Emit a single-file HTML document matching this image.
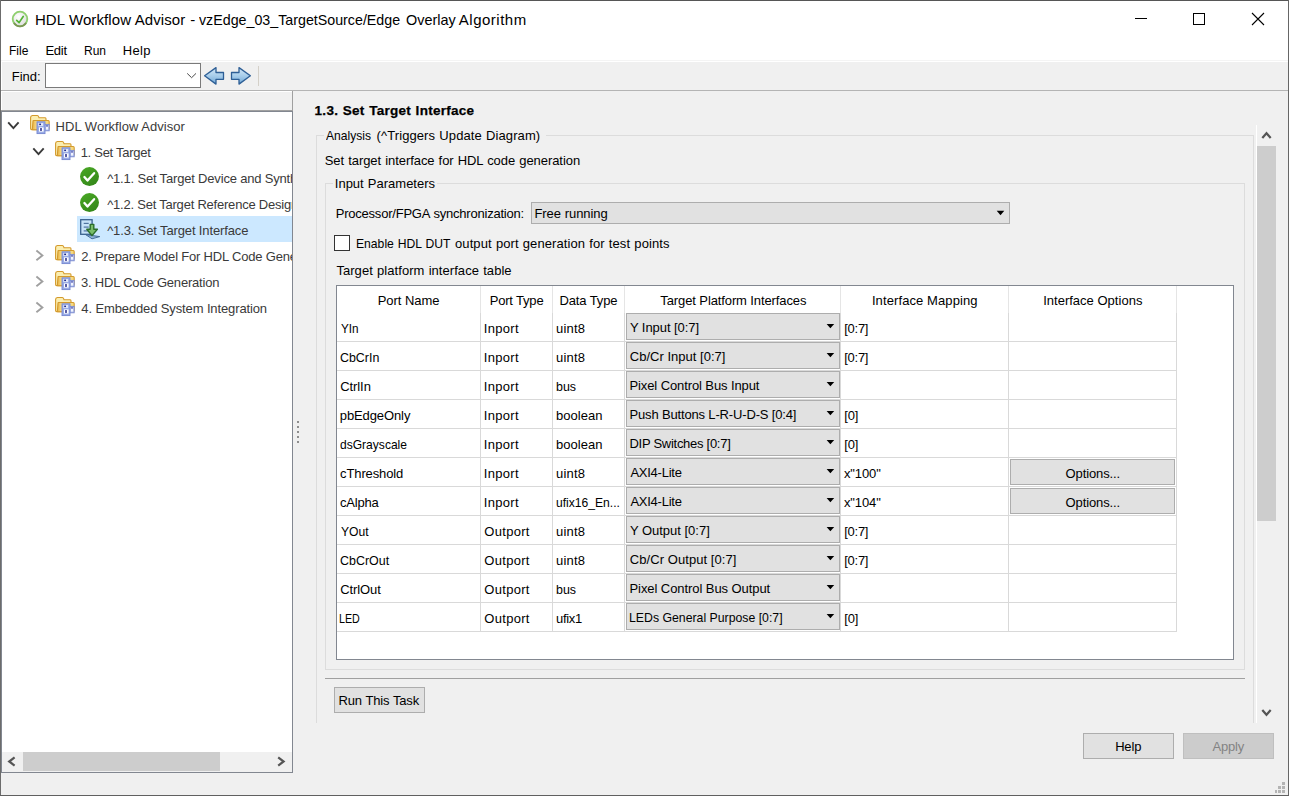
<!DOCTYPE html>
<html><head><meta charset="utf-8"><title>HDL Workflow Advisor</title>
<style>
html,body{margin:0;padding:0;background:#f0f0f0;}
body{width:1289px;height:796px;overflow:hidden;position:relative;font-family:"Liberation Sans",sans-serif;}
#win{position:absolute;left:0;top:0;width:1289px;height:796px;overflow:hidden;}
.b{position:absolute;}
.t{position:absolute;transform-origin:0 0;white-space:nowrap;line-height:20px;height:20px;color:#000;font-family:"Liberation Sans",sans-serif;}
svg{position:absolute;left:0;top:0;}
</style></head><body><div id="win">
<div class="b" style="left:0px;top:0px;width:1289px;height:796px;background:#f0f0f0;"></div>
<div class="b" style="left:0px;top:0px;width:1289px;height:60px;background:#ffffff;"></div>
<div class="b" style="left:0px;top:60px;width:1289px;height:1px;background:#f4f4f4;"></div>
<div class="b" style="left:0px;top:61px;width:1289px;height:1px;background:#ffffff;"></div>
<div class="b" style="left:1px;top:61px;width:1px;height:29px;background:#ffffff;"></div>
<div class="b" style="left:1px;top:90px;width:1287px;height:1px;background:#b4b4b4;"></div>
<div class="b" style="left:1px;top:91px;width:291px;height:1px;background:#ffffff;"></div>
<div class="b" style="left:292px;top:91px;width:1px;height:20px;background:#a0a0a0;"></div>
<div class="b" style="left:45px;top:63px;width:156px;height:25px;background:#fff;border:1px solid #7a7a7a;box-sizing:border-box;"></div>
<div class="b" style="left:258px;top:66px;width:1px;height:20px;background:#d4d0c8;"></div>
<div class="b" style="left:1px;top:91px;width:1px;height:20px;background:#ffffff;"></div>
<div class="b" style="left:1px;top:110px;width:292px;height:1px;background:#a0a0a0;"></div>
<div class="b" style="left:1px;top:111px;width:292px;height:662px;background:#fff;border:1px solid #828790;box-sizing:border-box;"></div>
<div class="b" style="left:77px;top:216px;width:215px;height:26px;background:#cce8ff;"></div>
<div class="b" style="left:2px;top:752px;width:290px;height:20px;background:#f0f0f0;"></div>
<div class="b" style="left:23px;top:752px;width:197px;height:19px;background:#cdcdcd;"></div>
<div class="b" style="left:316px;top:135px;width:1px;height:588px;background:#dcdcdc;"></div>
<div class="b" style="left:316px;top:135px;width:938px;height:1px;background:#dcdcdc;"></div>
<div class="b" style="left:1253px;top:135px;width:1px;height:588px;background:#dcdcdc;"></div>
<div class="b" style="left:324px;top:128px;width:222px;height:16px;background:#f0f0f0;"></div>
<div class="b" style="left:325px;top:183px;width:920px;height:487px;border:1px solid #dcdcdc;box-sizing:border-box;"></div>
<div class="b" style="left:333px;top:176px;width:104px;height:16px;background:#f0f0f0;"></div>
<div class="b" style="left:1256px;top:125px;width:1px;height:598px;background:#ffffff;"></div>
<div class="b" style="left:1257px;top:146px;width:19px;height:375px;background:#cdcdcd;"></div>
<div class="b" style="left:531px;top:202px;width:479px;height:22px;background:#e1e1e1;border:1px solid #adadad;box-sizing:border-box;"></div>
<div class="b" style="left:334px;top:235px;width:16px;height:16px;background:#fff;border:1px solid #333;box-sizing:border-box;"></div>
<div class="b" style="left:336px;top:285px;width:898px;height:375px;background:#fff;border:1px solid #828790;box-sizing:border-box;"></div>
<div class="b" style="left:480px;top:286px;width:1px;height:27px;background:#e5e5e5;"></div>
<div class="b" style="left:480px;top:313px;width:1px;height:319px;background:#d9d9d9;"></div>
<div class="b" style="left:552px;top:286px;width:1px;height:27px;background:#e5e5e5;"></div>
<div class="b" style="left:552px;top:313px;width:1px;height:319px;background:#d9d9d9;"></div>
<div class="b" style="left:624px;top:286px;width:1px;height:27px;background:#e5e5e5;"></div>
<div class="b" style="left:624px;top:313px;width:1px;height:319px;background:#d9d9d9;"></div>
<div class="b" style="left:840px;top:286px;width:1px;height:27px;background:#e5e5e5;"></div>
<div class="b" style="left:840px;top:313px;width:1px;height:319px;background:#d9d9d9;"></div>
<div class="b" style="left:1008px;top:286px;width:1px;height:27px;background:#e5e5e5;"></div>
<div class="b" style="left:1008px;top:313px;width:1px;height:319px;background:#d9d9d9;"></div>
<div class="b" style="left:1176px;top:286px;width:1px;height:27px;background:#e5e5e5;"></div>
<div class="b" style="left:1176px;top:313px;width:1px;height:319px;background:#d9d9d9;"></div>
<div class="b" style="left:337px;top:341px;width:840px;height:1px;background:#d9d9d9;"></div>
<div class="b" style="left:337px;top:370px;width:840px;height:1px;background:#d9d9d9;"></div>
<div class="b" style="left:337px;top:399px;width:840px;height:1px;background:#d9d9d9;"></div>
<div class="b" style="left:337px;top:428px;width:840px;height:1px;background:#d9d9d9;"></div>
<div class="b" style="left:337px;top:457px;width:840px;height:1px;background:#d9d9d9;"></div>
<div class="b" style="left:337px;top:486px;width:840px;height:1px;background:#d9d9d9;"></div>
<div class="b" style="left:337px;top:515px;width:840px;height:1px;background:#d9d9d9;"></div>
<div class="b" style="left:337px;top:544px;width:840px;height:1px;background:#d9d9d9;"></div>
<div class="b" style="left:337px;top:573px;width:840px;height:1px;background:#d9d9d9;"></div>
<div class="b" style="left:337px;top:602px;width:840px;height:1px;background:#d9d9d9;"></div>
<div class="b" style="left:337px;top:631px;width:840px;height:1px;background:#d9d9d9;"></div>
<div class="b" style="left:626px;top:313px;width:214px;height:27px;background:#e1e1e1;border:1px solid #adadad;box-sizing:border-box;"></div>
<div class="b" style="left:626px;top:342px;width:214px;height:27px;background:#e1e1e1;border:1px solid #adadad;box-sizing:border-box;"></div>
<div class="b" style="left:626px;top:371px;width:214px;height:27px;background:#e1e1e1;border:1px solid #adadad;box-sizing:border-box;"></div>
<div class="b" style="left:626px;top:400px;width:214px;height:27px;background:#e1e1e1;border:1px solid #adadad;box-sizing:border-box;"></div>
<div class="b" style="left:626px;top:429px;width:214px;height:27px;background:#e1e1e1;border:1px solid #adadad;box-sizing:border-box;"></div>
<div class="b" style="left:626px;top:458px;width:214px;height:27px;background:#e1e1e1;border:1px solid #adadad;box-sizing:border-box;"></div>
<div class="b" style="left:626px;top:487px;width:214px;height:27px;background:#e1e1e1;border:1px solid #adadad;box-sizing:border-box;"></div>
<div class="b" style="left:626px;top:516px;width:214px;height:27px;background:#e1e1e1;border:1px solid #adadad;box-sizing:border-box;"></div>
<div class="b" style="left:626px;top:545px;width:214px;height:27px;background:#e1e1e1;border:1px solid #adadad;box-sizing:border-box;"></div>
<div class="b" style="left:626px;top:574px;width:214px;height:27px;background:#e1e1e1;border:1px solid #adadad;box-sizing:border-box;"></div>
<div class="b" style="left:626px;top:603px;width:214px;height:27px;background:#e1e1e1;border:1px solid #adadad;box-sizing:border-box;"></div>
<div class="b" style="left:1010px;top:459px;width:165px;height:26px;background:#e1e1e1;border:1px solid #adadad;box-sizing:border-box;"></div>
<div class="b" style="left:1010px;top:488px;width:165px;height:26px;background:#e1e1e1;border:1px solid #adadad;box-sizing:border-box;"></div>
<div class="b" style="left:325px;top:678px;width:920px;height:1px;background:#a0a0a0;"></div>
<div class="b" style="left:334px;top:687px;width:91px;height:26px;background:#e1e1e1;border:1px solid #adadad;box-sizing:border-box;"></div>
<div class="b" style="left:1083px;top:733px;width:91px;height:26px;background:#e1e1e1;border:1px solid #adadad;box-sizing:border-box;"></div>
<div class="b" style="left:1183px;top:733px;width:91px;height:26px;background:#cccccc;border:1px solid #bfbfbf;box-sizing:border-box;"></div>
<svg width="1289" height="796" viewBox="0 0 1289 796">
<defs>
<linearGradient id="gArrow" x1="0" y1="0" x2="0" y2="1"><stop offset="0" stop-color="#d4e8f7"/><stop offset="0.5" stop-color="#a7cdea"/><stop offset="1" stop-color="#6fa6d6"/></linearGradient>
<linearGradient id="gFold" x1="0" y1="0" x2="1" y2="0"><stop offset="0" stop-color="#e9b443"/><stop offset="0.35" stop-color="#fbe9a0"/><stop offset="1" stop-color="#f5d678"/></linearGradient>
<linearGradient id="gGreen" x1="0" y1="0" x2="0.6" y2="1"><stop offset="0" stop-color="#4aa925"/><stop offset="1" stop-color="#35891a"/></linearGradient>
<radialGradient id="gBall" cx="0.4" cy="0.35" r="0.7"><stop offset="0" stop-color="#ffffff"/><stop offset="1" stop-color="#dcdcdc"/></radialGradient>
<g id="folder">
  <path d="M0.6 3.4 Q0.6 1.4 2.4 1.3 L7.4 1.3 Q8.6 1.4 9 3.5 L15.2 3.5 Q16 3.6 16 4.7 L16 14.4 Q16 15.4 15 15.4 L1.6 15.4 Q0.6 15.4 0.6 14.4 Z" fill="#fbeeb0" stroke="#d49a2c" stroke-width="1.1"/>
  <path d="M3.4 6.3 L18.2 6.3 Q19.2 6.4 19.2 7.5 L19.2 14.4 Q19.2 15.5 18.2 15.5 L2.6 15.5 Q2.2 15.5 2.4 14.6 L3.0 6.9 Q3.0 6.3 3.4 6.3 Z" fill="url(#gFold)" stroke="#d39a2e" stroke-width="1.1"/>
  <rect x="14.6" y="10.2" width="4.6" height="6.4" fill="#a9b8ea" stroke="#7c8cd2" stroke-width="0.9"/>
  <rect x="15.8" y="11.6" width="2.4" height="3.8" fill="#f2f5fd"/>
  <rect x="16.4" y="11.0" width="1.2" height="1.6" fill="#34399f"/>
  <rect x="7.0" y="7.6" width="8.0" height="11.8" fill="#9aace6" stroke="#7587d0" stroke-width="0.9"/>
  <rect x="8.3" y="8.8" width="4.8" height="3.0" fill="#dfe6f8"/>
  <rect x="9.2" y="9.4" width="1.8" height="1.5" fill="#1f2889"/>
  <rect x="9.0" y="13.2" width="4.6" height="4.2" fill="#ffffff"/>
  <rect x="10.3" y="13.7" width="1.4" height="3.2" rx="0.6" fill="#10167c"/>
</g>
<g id="okc">
  <circle cx="9.6" cy="9.6" r="9.5" fill="url(#gGreen)"/>
  <path d="M4.5 10 L7.6 13.6 L14.2 6.2" fill="none" stroke="#ffffff" stroke-width="2.3" stroke-linecap="round" stroke-linejoin="round"/>
</g>
<path id="chevD" d="M-5.2 -2.9 L0 2.9 L5.2 -2.9" fill="none" stroke="#3a3a3a" stroke-width="1.9"/>
<path id="chevR" d="M-3 -4.9 L3 0 L-3 4.9" fill="none" stroke="#a0a0a0" stroke-width="1.9"/>
<path id="tri" d="M0 0 L7.6 0 L3.8 4.4 Z" fill="#000"/>
</defs>
<circle cx="20" cy="19" r="7.3" fill="url(#gBall)" stroke="#8fcf6e" stroke-width="1.8"/>
<path d="M13.9 23 A7.3 7.3 0 0 0 26.1 23" fill="none" stroke="#7b9655" stroke-width="1.8"/>
<path d="M16.7 20.4 L19.1 22.6 L23.2 16.5" fill="none" stroke="#55b336" stroke-width="1.7" stroke-linecap="round" stroke-linejoin="round"/>
<rect x="1135" y="18" width="12" height="1" fill="#000"/>
<rect x="1193.5" y="13.5" width="11" height="11" fill="none" stroke="#000" stroke-width="1"/>
<path d="M1252 13 L1264 25 M1264 13 L1252 25" stroke="#000" stroke-width="1.1" fill="none"/>
<path d="M187.2 73.4 L191.6 77.7 L196 73.4" fill="none" stroke="#4a4a4a" stroke-width="1" stroke-linejoin="round"/>
<path d="M204.6 75.8 L216 67.6 L216 72.5 L223.5 72.5 L223.5 79.3 L216 79.3 L216 84.1 Z" fill="url(#gArrow)" stroke="#2e5f96" stroke-width="1.3" stroke-linejoin="round"/>
<path d="M250.4 75.8 L239 67.6 L239 72.5 L231.5 72.5 L231.5 79.3 L239 79.3 L239 84.1 Z" fill="url(#gArrow)" stroke="#2e5f96" stroke-width="1.3" stroke-linejoin="round"/>
<use href="#chevD" x="13.4" y="125.3"/>
<use href="#chevD" x="38.5" y="151.3"/>
<use href="#chevR" x="39.4" y="255.4"/>
<use href="#chevR" x="39.4" y="281.4"/>
<use href="#chevR" x="39.4" y="307.4"/>
<use href="#folder" x="30" y="114.2"/>
<use href="#folder" x="55" y="140.2"/>
<use href="#folder" x="55" y="244.2"/>
<use href="#folder" x="55" y="270.2"/>
<use href="#folder" x="55" y="296.2"/>
<use href="#okc" x="79.9" y="167"/>
<use href="#okc" x="79.9" y="193"/>
<rect x="80.7" y="219.7" width="11.4" height="14.6" fill="#c6e1f8" stroke="#3a628f" stroke-width="1.3"/>
<rect x="83.7" y="222.8" width="5" height="1.2" fill="#4f74a0"/>
<rect x="83.7" y="226.5" width="5" height="1.2" fill="#4f74a0"/>
<rect x="83.7" y="230.3" width="5" height="1.2" fill="#4f74a0"/>
<path d="M85.6 234.6 L99.8 236.6 L92 238.8 Z" fill="#8fb2d8" stroke="#3a628f" stroke-width="0.9"/>
<path d="M90.2 224.4 L93.8 224.4 L93.8 229.2 L97.4 229.2 L92 235.6 L86.8 229.2 L90.2 229.2 Z" fill="#79bd69" stroke="#2b6e2b" stroke-width="1.4" stroke-linejoin="round"/>
<path d="M14.6 757.4 L9.2 761.5 L14.6 765.6" fill="none" stroke="#555" stroke-width="2.2"/>
<path d="M278.2 757.4 L283.6 761.5 L278.2 765.6" fill="none" stroke="#555" stroke-width="2.2"/>
<path d="M1262.3 138 L1266.5 133.2 L1270.7 138" fill="none" stroke="#555" stroke-width="2.2"/>
<path d="M1262.3 710 L1266.5 714.8 L1270.7 710" fill="none" stroke="#555" stroke-width="2.2"/>
<use href="#tri" x="996.7" y="210.8"/>
<use href="#tri" x="826.6" y="323.9"/>
<use href="#tri" x="826.6" y="352.9"/>
<use href="#tri" x="826.6" y="381.9"/>
<use href="#tri" x="826.6" y="410.9"/>
<use href="#tri" x="826.6" y="439.9"/>
<use href="#tri" x="826.6" y="468.9"/>
<use href="#tri" x="826.6" y="497.9"/>
<use href="#tri" x="826.6" y="526.9"/>
<use href="#tri" x="826.6" y="555.9"/>
<use href="#tri" x="826.6" y="584.9"/>
<use href="#tri" x="826.6" y="613.9"/>
<rect x="297" y="421" width="2" height="2" fill="#8e8e8e"/>
<rect x="297" y="426" width="2" height="2" fill="#8e8e8e"/>
<rect x="297" y="431" width="2" height="2" fill="#8e8e8e"/>
<rect x="297" y="436" width="2" height="2" fill="#8e8e8e"/>
<rect x="297" y="441" width="2" height="2" fill="#8e8e8e"/>
<rect x="1282" y="782" width="3" height="3" fill="#b4b4b4"/>
<rect x="1278" y="786" width="3" height="3" fill="#b4b4b4"/>
<rect x="1282" y="786" width="3" height="3" fill="#b4b4b4"/>
<rect x="1275" y="790" width="2" height="3" fill="#b4b4b4"/>
<rect x="1278" y="790" width="3" height="3" fill="#b4b4b4"/>
<rect x="1282" y="790" width="3" height="3" fill="#b4b4b4"/>
</svg>
<span class="t" id="t0" style="left:34.90px;top:10px;font-size:15px;letter-spacing:0.106px;">HDL Workflow Advisor</span>
<span class="t" id="t1" style="left:190.20px;top:10px;font-size:15px;letter-spacing:-0.150px;">-</span>
<span class="t" id="t2" style="left:199.36px;top:10px;font-size:15px;transform:scaleX(0.9495);">vzEdge_03_TargetSource/Edge</span>
<span class="t" id="t3" style="left:405.56px;top:10px;font-size:15px;transform:scaleX(0.9614);">Overlay</span>
<span class="t" id="t4" style="left:458.80px;top:10px;font-size:15px;letter-spacing:0.500px;">Algorithm</span>
<span class="t" id="t5" style="left:9.42px;top:41px;font-size:13px;transform:scaleX(0.9248);">File</span>
<span class="t" id="t6" style="left:45.49px;top:41px;font-size:13px;letter-spacing:-0.299px;">Edit</span>
<span class="t" id="t7" style="left:84.42px;top:41px;font-size:13px;transform:scaleX(0.9237);">Run</span>
<span class="t" id="t8" style="left:122.80px;top:41px;font-size:13px;letter-spacing:0.333px;">Help</span>
<span class="t" id="t9" style="left:11.69px;top:67px;font-size:13px;letter-spacing:0.008px;">Find:</span>
<span class="t" id="t10" style="left:55.62px;top:117px;font-size:13px;color:#3a3a3a;letter-spacing:0.029px;">HDL Workflow Advisor</span>
<span class="t" id="t11" style="left:80.67px;top:143px;font-size:13px;color:#3a3a3a;letter-spacing:-0.281px;">1. Set Target</span>
<span class="t" id="t12" style="left:107.14px;top:169px;font-size:13px;color:#3a3a3a;letter-spacing:-0.180px;width:184.46px;overflow:hidden;">^1.1. Set Target Device and Synthesis Tool</span>
<span class="t" id="t13" style="left:107.14px;top:195px;font-size:13px;color:#3a3a3a;letter-spacing:-0.219px;width:184.46px;overflow:hidden;">^1.2. Set Target Reference Design</span>
<span class="t" id="t14" style="left:107.14px;top:221px;font-size:13px;color:#3a3a3a;letter-spacing:-0.135px;">^1.3. Set Target Interface</span>
<span class="t" id="t15" style="left:81.13px;top:247px;font-size:13px;color:#3a3a3a;letter-spacing:-0.188px;width:210.47px;overflow:hidden;">2. Prepare Model For HDL Code Generation</span>
<span class="t" id="t16" style="left:80.92px;top:273px;font-size:13px;color:#3a3a3a;letter-spacing:-0.192px;">3. HDL Code Generation</span>
<span class="t" id="t17" style="left:81.37px;top:299px;font-size:13px;color:#3a3a3a;letter-spacing:-0.125px;">4. Embedded System Integration</span>
<span class="t" id="t18" style="left:314.60px;top:101px;font-size:13.5px;font-weight:700;-webkit-text-stroke:0.25px #000;letter-spacing:0.271px;word-spacing:0.55px;">1.3. Set Target Interface</span>
<span class="t" id="t19" style="left:326.41px;top:126px;font-size:13px;word-spacing:0.55px;transform:scaleX(0.9289);">Analysis</span>
<span class="t" id="t20" style="left:376.61px;top:126px;font-size:13px;letter-spacing:0.088px;word-spacing:0.55px;">(^Triggers Update Diagram)</span>
<span class="t" id="t21" style="left:324.76px;top:151px;font-size:13px;letter-spacing:-0.059px;word-spacing:0.55px;">Set target interface for HDL code generation</span>
<span class="t" id="t22" style="left:334.80px;top:174px;font-size:13px;letter-spacing:-0.003px;word-spacing:0.55px;">Input Parameters</span>
<span class="t" id="t23" style="left:335.68px;top:204px;font-size:13px;letter-spacing:-0.213px;word-spacing:0.55px;">Processor/FPGA synchronization:</span>
<span class="t" id="t24" style="left:534.48px;top:204px;font-size:13px;letter-spacing:-0.102px;word-spacing:0.55px;">Free running</span>
<span class="t" id="t25" style="left:355.80px;top:234px;font-size:13px;word-spacing:0.55px;transform:scaleX(0.9348);">Enable HDL DUT</span>
<span class="t" id="t26" style="left:455.07px;top:234px;font-size:13px;letter-spacing:0.074px;word-spacing:0.55px;">output port generation for test points</span>
<span class="t" id="t27" style="left:336.40px;top:261px;font-size:13px;letter-spacing:0.052px;word-spacing:0.55px;">Target platform interface table</span>
<span class="t" id="t28" style="left:377.68px;top:291px;font-size:13px;letter-spacing:-0.042px;">Port Name</span>
<span class="t" id="t29" style="left:489.68px;top:291px;font-size:13px;letter-spacing:-0.180px;">Port Type</span>
<span class="t" id="t30" style="left:559.48px;top:291px;font-size:13px;letter-spacing:-0.129px;">Data Type</span>
<span class="t" id="t31" style="left:660.36px;top:291px;font-size:13px;letter-spacing:-0.111px;">Target Platform Interfaces</span>
<span class="t" id="t32" style="left:871.90px;top:291px;font-size:13px;letter-spacing:0.102px;">Interface Mapping</span>
<span class="t" id="t33" style="left:1043.15px;top:291px;font-size:13px;letter-spacing:0.016px;">Interface Options</span>
<span class="t" id="t34" style="left:340.59px;top:319px;font-size:13px;transform:scaleX(0.9028);">YIn</span>
<span class="t" id="t35" style="left:483.80px;top:319px;font-size:13px;letter-spacing:0.318px;">Inport</span>
<span class="t" id="t36" style="left:556.01px;top:319px;font-size:13px;letter-spacing:0.218px;">uint8</span>
<span class="t" id="t37" style="left:629.91px;top:318px;font-size:13px;letter-spacing:-0.060px;">Y Input [0:7]</span>
<span class="t" id="t38" style="left:844.31px;top:319px;font-size:13px;letter-spacing:-0.288px;">[0:7]</span>
<span class="t" id="t39" style="left:340.38px;top:348px;font-size:13px;transform:scaleX(0.9546);">CbCrIn</span>
<span class="t" id="t40" style="left:483.80px;top:348px;font-size:13px;letter-spacing:0.318px;">Inport</span>
<span class="t" id="t41" style="left:556.01px;top:348px;font-size:13px;letter-spacing:0.218px;">uint8</span>
<span class="t" id="t42" style="left:629.87px;top:347px;font-size:13px;letter-spacing:0.007px;">Cb/Cr Input [0:7]</span>
<span class="t" id="t43" style="left:844.31px;top:348px;font-size:13px;letter-spacing:-0.288px;">[0:7]</span>
<span class="t" id="t44" style="left:340.17px;top:377px;font-size:13px;letter-spacing:-0.071px;">CtrlIn</span>
<span class="t" id="t45" style="left:483.80px;top:377px;font-size:13px;letter-spacing:0.318px;">Inport</span>
<span class="t" id="t46" style="left:555.83px;top:377px;font-size:13px;transform:scaleX(0.9563);">bus</span>
<span class="t" id="t47" style="left:629.48px;top:376px;font-size:13px;letter-spacing:-0.102px;">Pixel Control Bus Input</span>
<span class="t" id="t48" style="left:339.80px;top:406px;font-size:13px;letter-spacing:-0.106px;">pbEdgeOnly</span>
<span class="t" id="t49" style="left:483.80px;top:406px;font-size:13px;letter-spacing:0.318px;">Inport</span>
<span class="t" id="t50" style="left:556.00px;top:406px;font-size:13px;letter-spacing:0.046px;">boolean</span>
<span class="t" id="t51" style="left:629.48px;top:405px;font-size:13px;letter-spacing:-0.158px;">Push Buttons L-R-U-D-S [0:4]</span>
<span class="t" id="t52" style="left:844.31px;top:406px;font-size:13px;letter-spacing:-0.193px;">[0]</span>
<span class="t" id="t53" style="left:340.42px;top:435px;font-size:13px;transform:scaleX(0.9273);">dsGrayscale</span>
<span class="t" id="t54" style="left:483.80px;top:435px;font-size:13px;letter-spacing:0.318px;">Inport</span>
<span class="t" id="t55" style="left:556.00px;top:435px;font-size:13px;letter-spacing:0.046px;">boolean</span>
<span class="t" id="t56" style="left:629.48px;top:434px;font-size:13px;letter-spacing:-0.275px;">DIP Switches [0:7]</span>
<span class="t" id="t57" style="left:844.31px;top:435px;font-size:13px;letter-spacing:-0.193px;">[0]</span>
<span class="t" id="t58" style="left:340.12px;top:464px;font-size:13px;letter-spacing:-0.127px;">cThreshold</span>
<span class="t" id="t59" style="left:483.80px;top:464px;font-size:13px;letter-spacing:0.318px;">Inport</span>
<span class="t" id="t60" style="left:556.01px;top:464px;font-size:13px;letter-spacing:0.218px;">uint8</span>
<span class="t" id="t61" style="left:630.40px;top:463px;font-size:13px;letter-spacing:-0.242px;">AXI4-Lite</span>
<span class="t" id="t62" style="left:843.97px;top:464px;font-size:13px;letter-spacing:-0.107px;">x&quot;100&quot;</span>
<span class="t" id="t63" style="left:1065.55px;top:464px;font-size:13px;letter-spacing:-0.111px;">Options...</span>
<span class="t" id="t64" style="left:340.12px;top:493px;font-size:13px;letter-spacing:-0.244px;">cAlpha</span>
<span class="t" id="t65" style="left:483.80px;top:493px;font-size:13px;letter-spacing:0.318px;">Inport</span>
<span class="t" id="t66" style="left:555.69px;top:493px;font-size:13px;transform:scaleX(0.9309);">ufix16_En...</span>
<span class="t" id="t67" style="left:630.40px;top:492px;font-size:13px;letter-spacing:-0.242px;">AXI4-Lite</span>
<span class="t" id="t68" style="left:843.97px;top:493px;font-size:13px;letter-spacing:-0.107px;">x&quot;104&quot;</span>
<span class="t" id="t69" style="left:1065.55px;top:493px;font-size:13px;letter-spacing:-0.111px;">Options...</span>
<span class="t" id="t70" style="left:340.50px;top:522px;font-size:13px;transform:scaleX(0.9335);">YOut</span>
<span class="t" id="t71" style="left:484.37px;top:522px;font-size:13px;letter-spacing:0.273px;">Outport</span>
<span class="t" id="t72" style="left:556.01px;top:522px;font-size:13px;letter-spacing:0.218px;">uint8</span>
<span class="t" id="t73" style="left:629.91px;top:521px;font-size:13px;letter-spacing:-0.011px;">Y Output [0:7]</span>
<span class="t" id="t74" style="left:844.31px;top:522px;font-size:13px;letter-spacing:-0.288px;">[0:7]</span>
<span class="t" id="t75" style="left:340.38px;top:551px;font-size:13px;transform:scaleX(0.9581);">CbCrOut</span>
<span class="t" id="t76" style="left:484.37px;top:551px;font-size:13px;letter-spacing:0.273px;">Outport</span>
<span class="t" id="t77" style="left:556.01px;top:551px;font-size:13px;letter-spacing:0.218px;">uint8</span>
<span class="t" id="t78" style="left:629.87px;top:550px;font-size:13px;letter-spacing:0.058px;">Cb/Cr Output [0:7]</span>
<span class="t" id="t79" style="left:844.31px;top:551px;font-size:13px;letter-spacing:-0.288px;">[0:7]</span>
<span class="t" id="t80" style="left:340.17px;top:580px;font-size:13px;letter-spacing:-0.076px;">CtrlOut</span>
<span class="t" id="t81" style="left:484.37px;top:580px;font-size:13px;letter-spacing:0.273px;">Outport</span>
<span class="t" id="t82" style="left:555.83px;top:580px;font-size:13px;transform:scaleX(0.9563);">bus</span>
<span class="t" id="t83" style="left:629.48px;top:579px;font-size:13px;letter-spacing:-0.069px;">Pixel Control Bus Output</span>
<span class="t" id="t84" style="left:339.43px;top:609px;font-size:13px;transform:scaleX(0.8241);">LED</span>
<span class="t" id="t85" style="left:484.37px;top:609px;font-size:13px;letter-spacing:0.273px;">Outport</span>
<span class="t" id="t86" style="left:556.01px;top:609px;font-size:13px;letter-spacing:-0.308px;">ufix1</span>
<span class="t" id="t87" style="left:629.42px;top:608px;font-size:13px;transform:scaleX(0.9445);">LEDs General Purpose [0:7]</span>
<span class="t" id="t88" style="left:844.31px;top:609px;font-size:13px;letter-spacing:-0.193px;">[0]</span>
<span class="t" id="t89" style="left:338.48px;top:691px;font-size:13px;letter-spacing:-0.192px;word-spacing:0.55px;">Run This Task</span>
<span class="t" id="t90" style="left:1115.15px;top:737px;font-size:13px;letter-spacing:-0.160px;word-spacing:0.55px;">Help</span>
<span class="t" id="t91" style="left:1212.54px;top:737px;font-size:13px;color:#838383;letter-spacing:-0.231px;word-spacing:0.55px;">Apply</span>
<div class="b" style="left:0px;top:0px;width:1289px;height:1px;background:#565656;"></div>
<div class="b" style="left:0px;top:0px;width:1px;height:796px;background:#6c6c6c;"></div>
<div class="b" style="left:1288px;top:0px;width:1px;height:796px;background:#666666;"></div>
<div class="b" style="left:0px;top:795px;width:1289px;height:1px;background:#606060;"></div>
</div></body></html>
